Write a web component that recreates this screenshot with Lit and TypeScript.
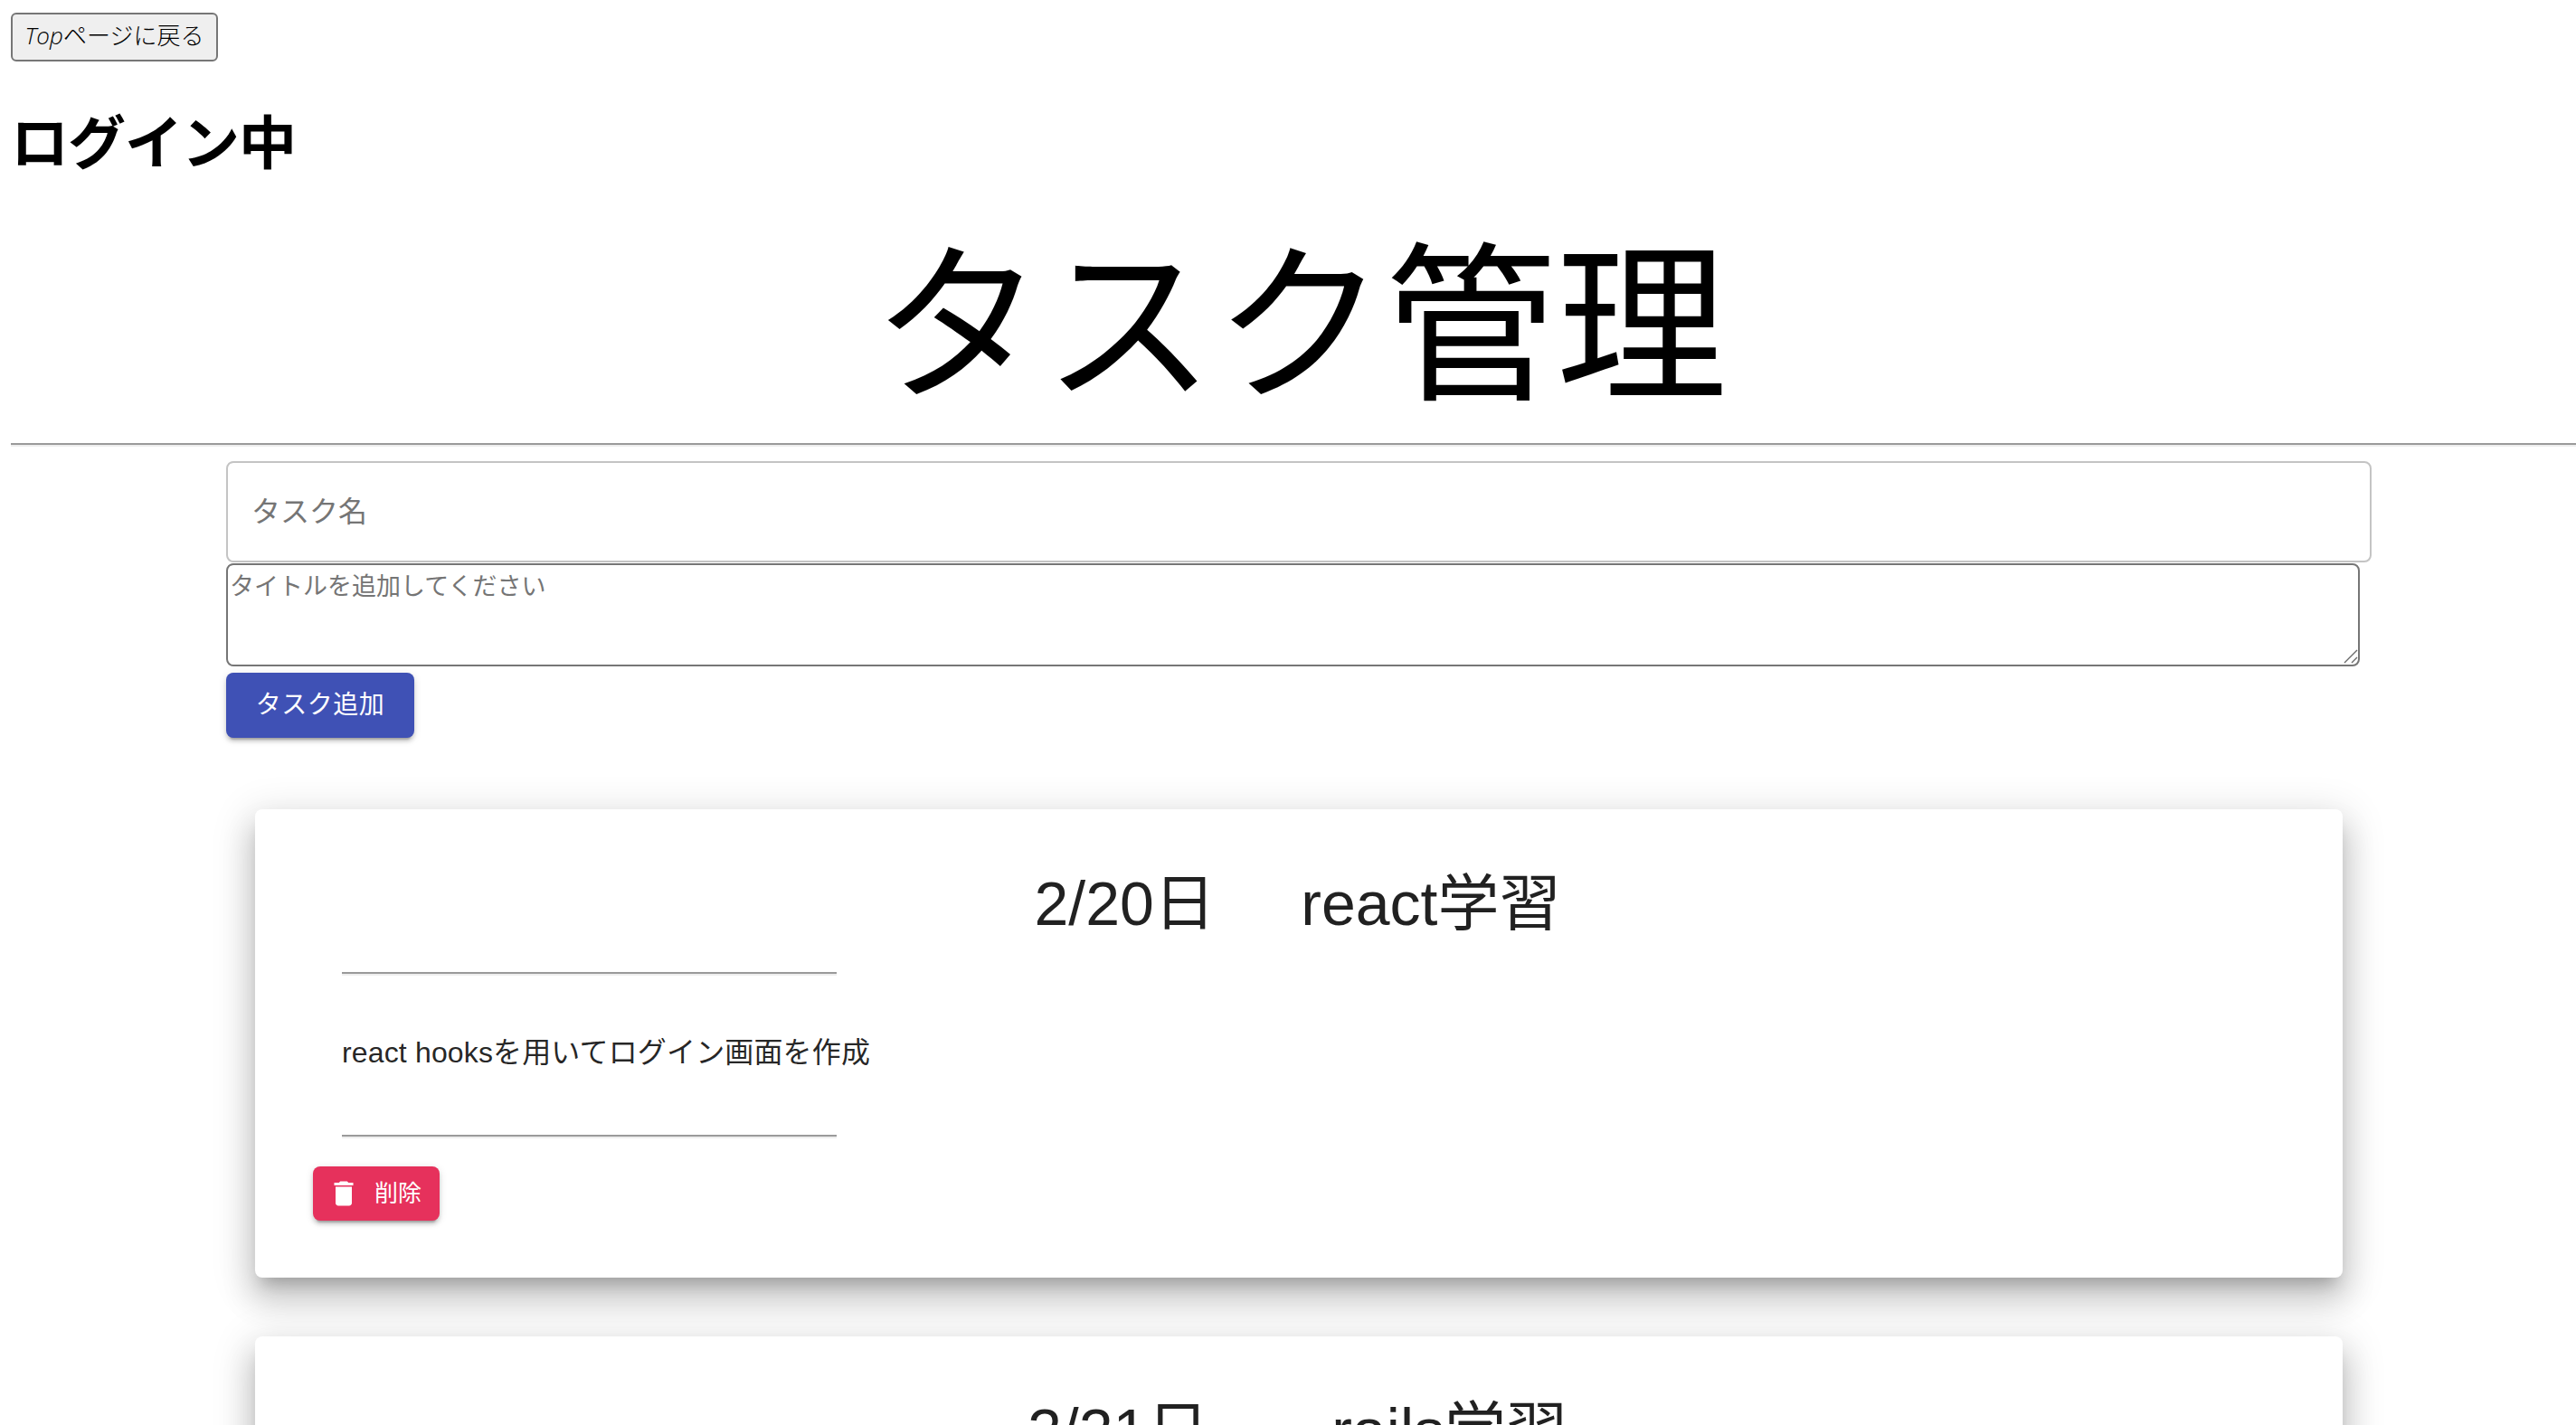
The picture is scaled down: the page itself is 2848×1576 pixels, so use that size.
import { LitElement, html, css } from "lit";
import { customElement } from "lit/decorators.js";

@customElement("app-root")
export class AppRoot extends LitElement {
  static styles = css`
    :host {
      display: block;
      height: 1576px;
      overflow: hidden;
      background: #fff;
      font-family: "Liberation Sans", "Noto Sans CJK JP", sans-serif;
      color: #000;
      box-sizing: border-box;
      padding: 14px 0 0 12px;
    }
    * { box-sizing: border-box; }
    .back {
      display: block;
      width: 229px;
      height: 54px;
      padding: 0 0 4px;
      border: 2px solid #767676;
      border-radius: 6px;
      background: #efefef;
      font-family: "Open Sans", "Noto Sans CJK JP", sans-serif;
      font-size: 26px;
      font-weight: 300;
      color: #000;
      text-align: center;
      line-height: 44px;
    }
    .back i { font-style: italic; }
    .user {
      margin: 53px 0 0;
      font-size: 64px;
      line-height: 64px;
      font-weight: 700;
      letter-spacing: -1px;
      font-family: "Noto Sans CJK JP", sans-serif;
    }
    .title {
      margin: 40px 0 0;
      height: 265px;
      padding-left: 14px;
      font-size: 189px;
      line-height: 240px;
      font-weight: 400;
      text-align: center;
      font-family: "Noto Sans CJK JP", sans-serif;
    }
    .rule {
      margin: 0;
      height: 4px;
      border: 0;
      border-top: 2px solid #9a9a9a;
      border-bottom: 2px solid #eeeeee;
    }
    .main {
      width: 2372px;
      margin: 16px 0 0 238px;
    }
    .field {
      display: flex;
      align-items: center;
      height: 112px;
      padding: 0 26px;
      border: 2px solid #c4c4c4;
      border-radius: 8px;
      background: #fff;
    }
    .field input {
      width: 100%;
      border: 0;
      outline: 0;
      padding: 0;
      background: transparent;
      font-family: "Liberation Sans", "Noto Sans CJK JP", sans-serif;
      font-size: 32px;
    }
    .field input::placeholder { color: #757575; opacity: 1; }
    .note-wrap {
      position: relative;
      width: 2359px;
      height: 114px;
      margin: 1px 0 0;
    }
    .note {
      display: block;
      width: 100%;
      height: 100%;
      padding: 2px;
      border: 2px solid #767676;
      border-radius: 8px;
      background: #fff;
      outline: 0;
      resize: none;
      font-family: "Liberation Sans", "Noto Sans CJK JP", sans-serif;
      font-size: 27px;
    }
    .note::placeholder { color: #757575; opacity: 1; }
    .grip {
      position: absolute;
      right: 2px;
      bottom: 3px;
      width: 16px;
      height: 16px;
      stroke: #6a6a6a;
      stroke-width: 1.4;
      fill: none;
    }
    .add {
      display: block;
      width: 208px;
      height: 72px;
      margin: 7px 0 0;
      padding: 0;
      border: 0;
      border-radius: 8px;
      background: #3f51b5;
      color: #fff;
      font-family: "Liberation Sans", "Noto Sans CJK JP", sans-serif;
      font-size: 28px;
      letter-spacing: .5px;
      line-height: 72px;
      box-shadow: 0 6px 2px -4px rgba(0,0,0,.2), 0 4px 4px 0 rgba(0,0,0,.14), 0 2px 10px 0 rgba(0,0,0,.12);
    }
    .cards {
      margin: 79px 32px 0;
      display: flex;
      flex-direction: column;
      gap: 65px;
    }
    .card {
      position: relative;
      height: 518px;
      padding: 64px 64px 0;
      border-radius: 8px;
      background: #fff;
      color: rgba(0,0,0,.87);
      box-shadow: 0 14px 16px -8px rgba(0,0,0,.2), 0 24px 34px 4px rgba(0,0,0,.14), 0 10px 44px 8px rgba(0,0,0,.12);
    }
    .card h4 {
      margin: 0;
      padding-right: 3px;
      font-size: 68px;
      line-height: 80px;
      font-weight: 400;
      text-align: center;
      white-space: pre;
    }
    .body { padding: 0 32px; }
    .line {
      width: 547px;
      height: 4px;
      margin: 0;
      border: 0;
      border-top: 2px solid #9a9a9a;
      border-bottom: 2px solid #eeeeee;
    }
    .first { margin-top: 36px; }
    .body p {
      margin: 0;
      height: 176px;
      font-size: 32px;
      letter-spacing: .15px;
      line-height: 171px;
    }
    .del {
      display: flex;
      align-items: center;
      gap: 16px;
      width: 140px;
      height: 60px;
      margin: 31px 0 0;
      padding: 0 0 0 16px;
      border: 0;
      border-radius: 8px;
      background: #e6315c;
      color: #fff;
      font-family: "Liberation Sans", "Noto Sans CJK JP", sans-serif;
      font-size: 26px;
      box-shadow: 0 6px 2px -4px rgba(0,0,0,.2), 0 4px 4px 0 rgba(0,0,0,.14), 0 2px 10px 0 rgba(0,0,0,.12);
    }
    .del span { padding-bottom: 6px; }
    .del svg { width: 36px; height: 36px; fill: #fff; flex: none; }
  `;

  private card(title: string, text: string) {
    return html`
      <article class="card">
        <h4>${title}</h4>
        <div class="body">
          <hr class="line first" />
          <p>${text}</p>
          <hr class="line" />
        </div>
        <button class="del">
          <svg viewBox="0 0 24 24"><path d="M6 19c0 1.1.9 2 2 2h8c1.1 0 2-.9 2-2V7H6v12zM19 4h-3.5l-1-1h-5l-1 1H5v2h14V4z"></path></svg>
          <span>削除</span>
        </button>
      </article>
    `;
  }

  render() {
    return html`
      <button class="back"><i>Top</i>ページに戻る</button>
      <h2 class="user">ログイン中</h2>
      <h1 class="title">タスク管理</h1>
      <hr class="rule" />
      <main class="main">
        <label class="field"><input placeholder="タスク名" /></label>
        <div class="note-wrap">
          <textarea class="note" placeholder="タイトルを追加してください"></textarea>
          <svg class="grip" viewBox="0 0 16 16"><path d="M1 15 15 1M9 15l6-6"></path></svg>
        </div>
        <button class="add">タスク追加</button>
        <section class="cards">
          ${this.card("2/20日\u00a0\u00a0\u00a0\u00a0\u00a0react学習", "react hooksを用いてログイン画面を作成")}
          ${this.card("2/21日\u3000\u3000rails学習", "railsを用いてログイン画面を作成")}
        </section>
      </main>
    `;
  }
}
